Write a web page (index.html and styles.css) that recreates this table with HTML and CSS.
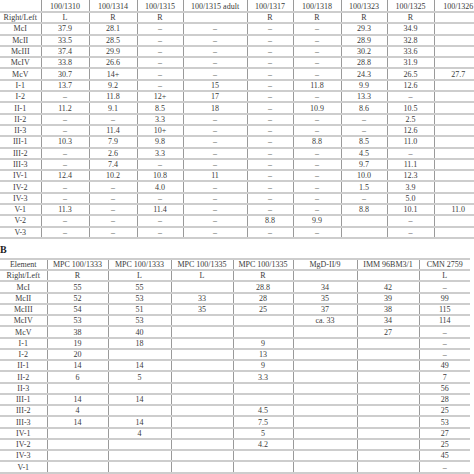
FILE: index.html
```html
<!DOCTYPE html>
<html>
<head>
<meta charset="utf-8">
<link rel="stylesheet" href="styles.css">
</head>
<body>
<div class="page">
<table class="tbl tbl-a">
<colgroup>
<col style="width:41px"><col style="width:48px"><col style="width:48px"><col style="width:46px"><col style="width:64px"><col style="width:46px"><col style="width:48px"><col style="width:46px"><col style="width:47px"><col style="width:48px">
</colgroup>
<tr class="head"><td></td><td>100/1310</td><td>100/1314</td><td>100/1315</td><td>100/1315 adult</td><td>100/1317</td><td>100/1318</td><td>100/1323</td><td>100/1325</td><td>100/1326</td></tr>
<tr><td>Right/Left</td><td>L</td><td>R</td><td>R</td><td></td><td>R</td><td>R</td><td>R</td><td>R</td><td></td></tr>
<tr><td>McI</td><td>37.9</td><td>28.1</td><td>–</td><td>–</td><td>–</td><td>–</td><td>29.3</td><td>34.9</td><td></td></tr>
<tr><td>McII</td><td>33.5</td><td>28.5</td><td>–</td><td>–</td><td>–</td><td>–</td><td>28.9</td><td>32.8</td><td></td></tr>
<tr><td>McIII</td><td>37.4</td><td>29.9</td><td>–</td><td>–</td><td>–</td><td>–</td><td>30.2</td><td>33.6</td><td></td></tr>
<tr><td>McIV</td><td>33.8</td><td>26.6</td><td>–</td><td>–</td><td>–</td><td>–</td><td>28.8</td><td>31.9</td><td></td></tr>
<tr><td>McV</td><td>30.7</td><td>14+</td><td>–</td><td>–</td><td>–</td><td>–</td><td>24.3</td><td>26.5</td><td>27.7</td></tr>
<tr><td>I-1</td><td>13.7</td><td>9.2</td><td>–</td><td>15</td><td>–</td><td>11.8</td><td>9.9</td><td>12.6</td><td></td></tr>
<tr><td>I-2</td><td>–</td><td>11.8</td><td>12+</td><td>17</td><td>–</td><td>–</td><td>13.3</td><td>–</td><td></td></tr>
<tr><td>II-1</td><td>11.2</td><td>9.1</td><td>8.5</td><td>18</td><td>–</td><td>10.9</td><td>8.6</td><td>10.5</td><td></td></tr>
<tr><td>II-2</td><td>–</td><td>–</td><td>3.3</td><td>–</td><td>–</td><td>–</td><td>–</td><td>2.5</td><td></td></tr>
<tr><td>II-3</td><td>–</td><td>11.4</td><td>10+</td><td>–</td><td>–</td><td>–</td><td>–</td><td>12.6</td><td></td></tr>
<tr><td>III-1</td><td>10.3</td><td>7.9</td><td>9.8</td><td>–</td><td>–</td><td>8.8</td><td>8.5</td><td>11.0</td><td></td></tr>
<tr><td>III-2</td><td>–</td><td>2.6</td><td>3.3</td><td>–</td><td>–</td><td>–</td><td>4.5</td><td>–</td><td></td></tr>
<tr><td>III-3</td><td>–</td><td>7.4</td><td>–</td><td>–</td><td>–</td><td>–</td><td>9.7</td><td>11.1</td><td></td></tr>
<tr><td>IV-1</td><td>12.4</td><td>10.2</td><td>10.8</td><td>11</td><td>–</td><td>–</td><td>10.0</td><td>12.3</td><td></td></tr>
<tr><td>IV-2</td><td>–</td><td>–</td><td>4.0</td><td>–</td><td>–</td><td>–</td><td>1.5</td><td>3.9</td><td></td></tr>
<tr><td>IV-3</td><td>–</td><td>–</td><td>–</td><td>–</td><td>–</td><td>–</td><td>–</td><td>5.0</td><td></td></tr>
<tr><td>V-1</td><td>11.3</td><td>–</td><td>11.4</td><td>–</td><td>–</td><td>–</td><td>8.8</td><td>10.1</td><td>11.0</td></tr>
<tr><td>V-2</td><td>–</td><td>–</td><td>–</td><td>–</td><td>8.8</td><td>9.9</td><td></td><td>–</td><td></td></tr>
<tr><td>V-3</td><td>–</td><td>–</td><td>–</td><td>–</td><td>–</td><td>–</td><td></td><td>–</td><td></td></tr>
</table>
<div class="label">B</div>
<table class="tbl tbl-b">
<colgroup>
<col style="width:47px"><col style="width:61px"><col style="width:63px"><col style="width:62px"><col style="width:60px"><col style="width:64px"><col style="width:62px"><col style="width:51px">
</colgroup>
<tr class="head"><td>Element</td><td>MPC 100/1333</td><td>MPC 100/1333</td><td>MPC 100/1335</td><td>MPC 100/1335</td><td>MgD-II/9</td><td>IMM 96BM3/1</td><td>CMN 2759</td></tr>
<tr><td>Right/Left</td><td>R</td><td>L</td><td>L</td><td>R</td><td></td><td></td><td>L</td></tr>
<tr><td>McI</td><td>55</td><td>55</td><td></td><td>28.8</td><td>34</td><td>42</td><td>–</td></tr>
<tr><td>McII</td><td>52</td><td>53</td><td>33</td><td>28</td><td>35</td><td>39</td><td>99</td></tr>
<tr><td>McIII</td><td>54</td><td>51</td><td>35</td><td>25</td><td>37</td><td>38</td><td>115</td></tr>
<tr><td>McIV</td><td>53</td><td>53</td><td></td><td></td><td>ca. 33</td><td>34</td><td>114</td></tr>
<tr><td>McV</td><td>38</td><td>40</td><td></td><td></td><td></td><td>27</td><td>–</td></tr>
<tr><td>I-1</td><td>19</td><td>18</td><td></td><td>9</td><td></td><td></td><td>–</td></tr>
<tr><td>I-2</td><td>20</td><td></td><td></td><td>13</td><td></td><td></td><td>–</td></tr>
<tr><td>II-1</td><td>14</td><td>14</td><td></td><td>9</td><td></td><td></td><td>49</td></tr>
<tr><td>II-2</td><td>6</td><td>5</td><td></td><td>3.3</td><td></td><td></td><td>7</td></tr>
<tr><td>II-3</td><td></td><td></td><td></td><td></td><td></td><td></td><td>56</td></tr>
<tr><td>III-1</td><td>14</td><td>14</td><td></td><td></td><td></td><td></td><td>28</td></tr>
<tr><td>III-2</td><td>4</td><td></td><td></td><td>4.5</td><td></td><td></td><td>25</td></tr>
<tr><td>III-3</td><td>14</td><td>14</td><td></td><td>7.5</td><td></td><td></td><td>53</td></tr>
<tr><td>IV-1</td><td></td><td>4</td><td></td><td>5</td><td></td><td></td><td>27</td></tr>
<tr><td>IV-2</td><td></td><td></td><td></td><td>4.2</td><td></td><td></td><td>25</td></tr>
<tr><td>IV-3</td><td></td><td></td><td></td><td></td><td></td><td></td><td>45</td></tr>
<tr><td>V-1</td><td></td><td></td><td></td><td></td><td></td><td></td><td>–</td></tr>
<tr><td></td><td></td><td></td><td></td><td></td><td></td><td></td><td></td></tr>
</table>
</div>
</body>
</html>
```
FILE: styles.css
```css
html, body {
  margin: 0;
  padding: 0;
  background: #ffffff;
  overflow: hidden;
}
.page {
  width: 474px;
  height: 474px;
  overflow: hidden;
  font-family: "Liberation Serif", "Times New Roman", serif;
  color: #3a3a3a;
}
.tbl {
  border-collapse: collapse;
  table-layout: fixed;
  font-size: 8px;
  line-height: 9px;
}
.tbl-a { width: 482px; }
.tbl-b { width: 470px; }
.tbl td {
  padding: 0;
  text-align: center;
  vertical-align: middle;
  white-space: nowrap;
  overflow: hidden;
  border-bottom: 2px solid #cdcdcd;
  border-left: 1px solid #9a9a9a;
}
.tbl td:first-child { border-left: none; }
.tbl tr { height: 11.3px; }
.tbl-a tr.head { height: 11px; }
.tbl-a tr.head td { padding-top: 2px; }
.tbl-b tr.head td { border-top: 2px solid #cdcdcd; }
.tbl-b tr { height: 11.25px; }
.label {
  font-weight: bold;
  font-size: 10px;
  line-height: 10px;
  color: #222;
  margin: 6px 0 3px 0;
}
```
